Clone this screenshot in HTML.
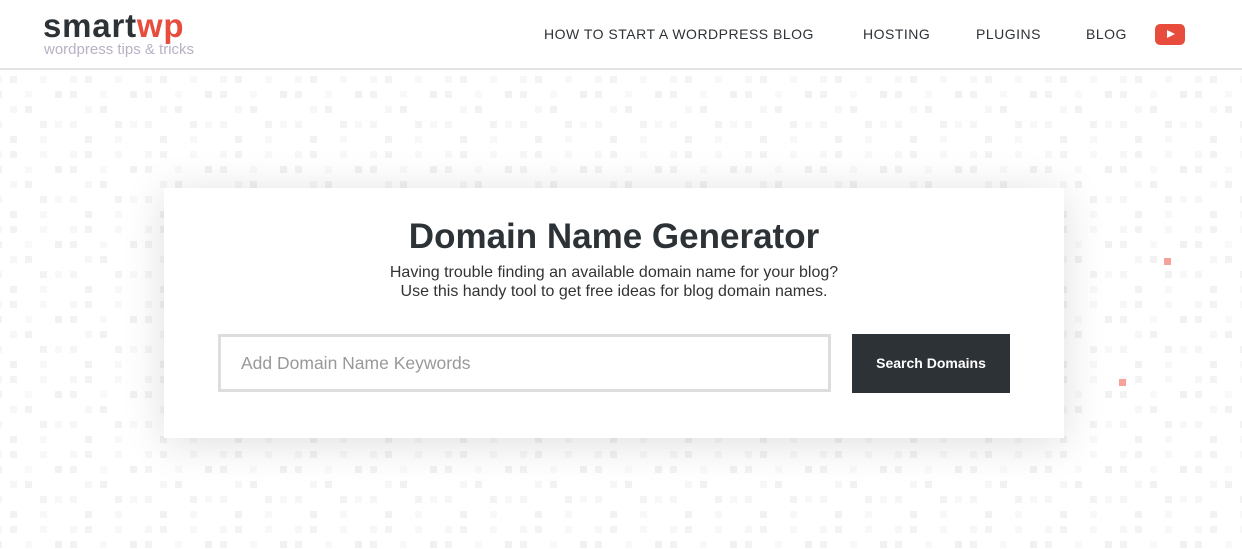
<!DOCTYPE html>
<html><head><meta charset="utf-8"><style>
*{margin:0;padding:0;box-sizing:border-box}
body{width:1242px;height:549px;overflow:hidden;background:#fff;font-family:"Liberation Sans",sans-serif;position:relative}
.hdr{position:absolute;left:0;top:0;width:1242px;height:70px;background:#fff;border-bottom:2px solid #e4e4e4;z-index:2}
.logo{position:absolute;left:43px;top:8px;font-weight:bold;font-size:33px;color:#2d3236;letter-spacing:0.8px;line-height:36px}
.logo span{color:#e74c3c}
.tag{position:absolute;left:44px;top:42px;font-size:15px;color:#b8b0c4;line-height:16px}
.nav{position:absolute;top:26px;font-size:14px;color:#2d3236;letter-spacing:0.5px}
.yt{position:absolute;left:1155px;top:24px;width:30px;height:21px;background:#e74c3c;border-radius:5px}
.yt:after{content:"";position:absolute;left:12px;top:6px;border-left:8px solid #fff;border-top:4.5px solid transparent;border-bottom:4.5px solid transparent}
svg.bg{position:absolute;left:0;top:71px}
.card{position:absolute;left:164px;top:188px;width:900px;height:250px;background:#fff;box-shadow:0 5px 40px rgba(0,0,0,0.13);text-align:center}
h1{font-size:35px;color:#2d3236;margin-top:29px;line-height:40px;font-weight:bold}
p{font-size:16px;color:#333;line-height:19px;margin-top:6px}
.inp{position:absolute;left:54px;top:146px;width:613px;height:58px;border:3px solid #ddd;text-align:left;padding-left:20px;line-height:52px;font-size:17.5px;color:#999}
.btn{position:absolute;left:688px;top:146px;width:158px;height:59px;background:#2d3236;color:#fff;font-weight:bold;font-size:14px;line-height:59px}
</style></head><body>
<svg class="bg" width="1242" height="478">
<defs><pattern id="p" width="75" height="75" patternUnits="userSpaceOnUse" x="-5" y="5">
<rect x="0" y="0" width="7" height="7" fill="#f7f7f7"/><rect x="15" y="0" width="7" height="7" fill="#f3f3f3"/><rect x="45" y="0" width="7" height="7" fill="#f8f8f8"/>
<rect x="0" y="15" width="7" height="7" fill="#f3f3f3"/><rect x="30" y="15" width="7" height="7" fill="#f9f9f9"/><rect x="60" y="15" width="7" height="7" fill="#f1f1f1"/>
<rect x="15" y="30" width="7" height="7" fill="#f7f7f7"/><rect x="30" y="30" width="7" height="7" fill="#f2f2f2"/>
<rect x="0" y="45" width="7" height="7" fill="#f6f6f6"/><rect x="45" y="45" width="7" height="7" fill="#f3f3f3"/><rect x="60" y="45" width="7" height="7" fill="#f8f8f8"/>
<rect x="15" y="60" width="7" height="7" fill="#f2f2f2"/><rect x="45" y="60" width="7" height="7" fill="#f8f8f8"/>
</pattern></defs>
<rect width="1242" height="478" fill="url(#p)"/>
<rect x="1164" y="187" width="7" height="7" fill="#f4a29a"/><rect x="1119" y="308" width="7" height="7" fill="#f4a29a"/>
</svg>
<div class="hdr">
<div class="logo">smart<span>wp</span></div>
<div class="tag">wordpress tips &amp; tricks</div>
<div class="nav" style="left:544px">HOW TO START A WORDPRESS BLOG</div>
<div class="nav" style="left:863px">HOSTING</div>
<div class="nav" style="left:976px">PLUGINS</div>
<div class="nav" style="left:1086px">BLOG</div>
<div class="yt"></div>
</div>
<div class="card">
<h1>Domain Name Generator</h1>
<p>Having trouble finding an available domain name for your blog?<br>Use this handy tool to get free ideas for blog domain names.</p>
<div class="inp">Add Domain Name Keywords</div>
<div class="btn">Search Domains</div>
</div>
</body></html>
